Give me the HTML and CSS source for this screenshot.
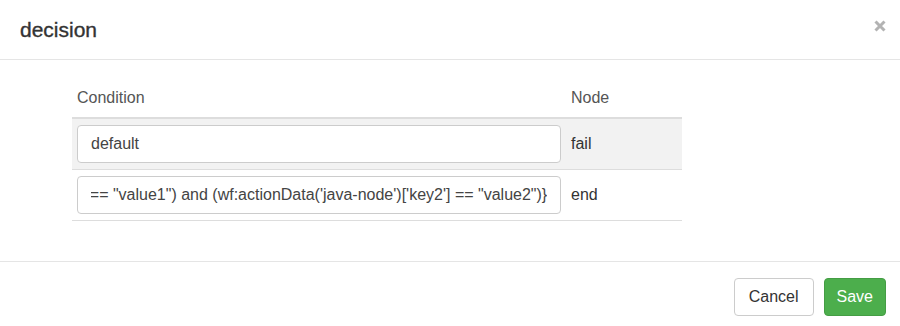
FILE: index.html
```html
<!DOCTYPE html>
<html lang="en">
<head>
    <meta charset="UTF-8">
    <title>decision</title>
    <link rel="stylesheet" href="styles.css">
</head>
<body>
    <div class="modal">
        <div class="modal-header">
            <h4 class="modal-title">decision</h4>
            <button class="close" type="button" aria-label="Close">
                <svg width="12" height="12" viewBox="0 0 12 12">
                    <path d="M1.5 1.5 L10.5 10.5 M10.5 1.5 L1.5 10.5" stroke="#b3b3b3" stroke-width="3" stroke-linecap="butt"/>
                </svg>
            </button>
        </div>
        <div class="modal-body">
            <table class="cases">
                <thead>
                    <tr>
                        <th class="col-cond">Condition</th>
                        <th>Node</th>
                    </tr>
                </thead>
                <tbody>
                    <tr class="odd">
                        <td><input class="form-control" type="text" value="default"></td>
                        <td>fail</td>
                    </tr>
                    <tr>
                        <td><input class="form-control scrolled" type="text" value="${(wf:actionData('java-node')['key1'] == &quot;value1&quot;) and (wf:actionData('java-node')['key2'] == &quot;value2&quot;)}"></td>
                        <td>end</td>
                    </tr>
                </tbody>
            </table>
        </div>
        <div class="modal-footer">
            <button class="btn btn-default" type="button">Cancel</button>
            <button class="btn btn-success" type="button">Save</button>
        </div>
    </div>
    <script>
        var scrolled = document.querySelectorAll('.scrolled');
        for(var i = 0;i<scrolled.length;i++){
            scrolled[i].scrollLeft = scrolled[i].scrollWidth;
        }
    </script>
</body>
</html>
```

FILE: styles.css
```css
*{
    box-sizing: border-box;
}
body{
    margin: 0;
    background: #fff;
    font-family: "Liberation Sans", Arial, sans-serif;
    font-size: 16px;
    color: #333;
}
.modal{
    width: 900px;
}
.modal-header{
    display: flex;
    justify-content: space-between;
    align-items: flex-start;
    padding: 17px 14px 17px 20px;
    border-bottom: 1px solid #e5e5e5;
}
.modal-title{
    margin: 0;
    font-size: 21px;
    line-height: 25px;
    font-weight: 500;
    color: #333;
    -webkit-text-stroke: 0.35px #333;
}
.close{
    display: block;
    margin-top: 3px;
    padding: 0;
    width: 12px;
    height: 12px;
    border: 0;
    background: transparent;
    cursor: pointer;
}
.close svg{
    display: block;
}
.modal-body{
    padding: 19px 0 40px 72px;
}
.cases{
    width: 610px;
    border-collapse: collapse;
    border-spacing: 0;
}
.cases th{
    padding: 8px 5px;
    line-height: 22px;
    text-align: left;
    font-weight: normal;
    color: #555;
    border-bottom: 2px solid #ddd;
}
.cases .col-cond{
    width: 494px;
}
.cases td{
    padding: 6px 5px;
    line-height: 22px;
    vertical-align: middle;
    border-bottom: 1px solid #ddd;
}
.cases tr.odd td{
    background: #f2f2f2;
}
.form-control{
    display: block;
    width: 100%;
    height: 38px;
    padding: 0 13px;
    font-family: "Liberation Sans", Arial, sans-serif;
    font-size: 16px;
    color: #444;
    background: #fff;
    border: 1px solid #ccc;
    border-radius: 4px;
    outline: none;
}
.modal-footer{
    display: flex;
    justify-content: flex-end;
    gap: 10px;
    padding: 16px 14px 15px;
    border-top: 1px solid #e5e5e5;
}
.btn{
    height: 38px;
    padding: 7px 14px;
    font-family: "Liberation Sans", Arial, sans-serif;
    font-size: 16px;
    line-height: 22px;
    border: 1px solid transparent;
    border-radius: 4px;
    cursor: pointer;
}
.btn-default{
    color: #333;
    background: #fff;
    border-color: #ccc;
}
.btn-success{
    padding: 7px 12px;
    color: #fff;
    background: #4cae4c;
    border-color: #449d44;
}
```
